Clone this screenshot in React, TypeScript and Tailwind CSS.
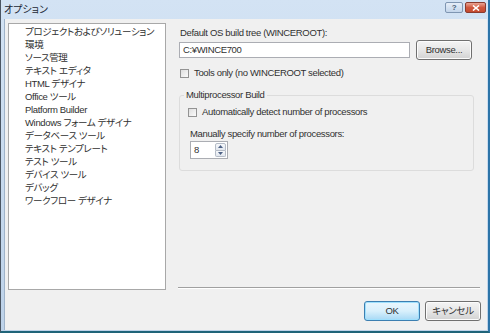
const items = [
  'プロジェクトおよびソリューション',
  '環境',
  'ソース管理',
  'テキスト エディタ',
  'HTML デザイナ',
  'Office ツール',
  'Platform Builder',
  'Windows フォーム デザイナ',
  'データベース ツール',
  'テキスト テンプレート',
  'テスト ツール',
  'デバイス ツール',
  'デバッグ',
  'ワークフロー デザイナ',
];

function CheckBox() {
  return (
    <span className="w-[9px] h-[9px] border border-[#939393] bg-gradient-to-br from-[#dedede] to-[#fbfbfb] shrink-0" />
  );
}

function Button({ label, primary }: { label: string; primary?: boolean }) {
  return (
    <div
      className={
        primary
          ? 'w-[56px] h-[20px] rounded-[3px] border border-[#3c7fb1] bg-gradient-to-b from-[#eaf6fd] via-[#d9f0fc] to-[#a7d9f5] flex items-center justify-center shadow-[inset_0_0_0_1px_#9fe0fd]'
          : 'w-[56px] h-[20px] rounded-[3px] border border-[#707070] bg-gradient-to-b from-[#f4f4f4] via-[#e7e7e7] to-[#d2d2d2] flex items-center justify-center shadow-[inset_0_0_0_1px_#fcfcfc]'
      }
    >
      {label}
    </div>
  );
}

export default function App() {
  return (
    <div className="w-[490px] h-[333px] flex flex-col bg-gradient-to-b from-[#d3e3f4] to-[#bdd2e9] border-l border-l-[#4b5663] border-r-2 border-r-[#2c74a8] border-b-2 border-b-[#1f6479] text-[#303030] text-[9.5px] tracking-[-0.35px] font-['Liberation_Sans','Noto_Sans_CJK_JP',sans-serif] [font-feature-settings:'palt'] overflow-hidden">
      {/* title bar */}
      <div className="h-[19px] flex items-center justify-between pl-[3px] pr-[2px] shrink-0">
        <span className="text-[10px] text-[#1a2633] tracking-[0px]">オプション</span>
        <div className="flex items-center gap-[2px] -mt-[4px]">
          <div className="w-[18px] h-[11px] rounded-[2px] border border-[#7f96b2] bg-gradient-to-b from-[#e6eef8] to-[#c3d5ea] flex items-center justify-center text-[8px] leading-none text-[#4b5f78] font-bold">
            ?
          </div>
          <div className="w-[21px] h-[11px] rounded-[2px] border border-[#8a3a2e] bg-gradient-to-b from-[#e8a494] via-[#d0583f] to-[#c44a2f] flex items-center justify-center">
            <svg width="8" height="6" viewBox="0 0 8 6">
              <path d="M1 0.5 L7 5.5 M7 0.5 L1 5.5" stroke="#ffffff" strokeWidth="1.6" />
            </svg>
          </div>
        </div>
      </div>

      {/* client */}
      <div className="flex-1 ml-[3px] mr-[1px] mb-[1px] bg-[#f0f0f0] border-l border-[#9fb3c9] flex flex-col pl-[3px] pt-[4px] pr-[6px]">
        <div className="flex h-[267px]">
          {/* list */}
          <div className="w-[158px] h-full bg-white border border-[#a8a8a8] pl-[16px] pt-[1px]">
            {items.map((t) => (
              <div key={t} className="h-[13px] leading-[13px] whitespace-nowrap">
                {t}
              </div>
            ))}
          </div>

          {/* right panel */}
          <div className="ml-[12px] w-[302px] flex flex-col">
            <div className="pl-[2px] mt-[4px] leading-[12px]">Default OS build tree (WINCEROOT):</div>
            <div className="flex items-center mt-[1px]">
              <div className="ml-[1px] w-[231px] h-[16px] bg-white border border-[#abadb3] flex items-center pl-[3px]">
                C:¥WINCE700
              </div>
              <div className="ml-[6px]">
                <Button label="Browse..." />
              </div>
            </div>
            <div className="flex items-center mt-[7px] pl-[2px] gap-[5px] leading-[12px]">
              <CheckBox />
              <span>Tools only (no WINCEROOT selected)</span>
            </div>

            {/* group box */}
            <div className="relative mt-[16px] ml-[1px] w-[295px] h-[76px] border border-[#dcdcdc] rounded-[3px] pt-[10px] pl-[8px]">
              <span className="absolute -top-[7px] left-[4px] px-[2px] bg-[#f0f0f0] leading-[12px]">
                Multiprocessor Build
              </span>
              <div className="flex items-center gap-[5px] leading-[12px]">
                <CheckBox />
                <span>Automatically detect number of processors</span>
              </div>
              <div className="mt-[10px] pl-[2px] leading-[12px]">Manually specify number of processors:</div>
              <div className="mt-[1px] ml-[2px] w-[38px] h-[18px] bg-white border border-[#abadb3] flex items-center justify-between pl-[3px] pr-[1px]">
                <span>8</span>
                <div className="flex flex-col w-[11px] h-[14px]">
                  <div className="flex-1 border border-[#b5bcc7] rounded-t-[2px] bg-gradient-to-b from-[#f6f8fb] to-[#e2e7ee] flex items-center justify-center">
                    <svg width="5" height="3" viewBox="0 0 5 3">
                      <path d="M0 3 L2.5 0 L5 3 Z" fill="#4d6185" />
                    </svg>
                  </div>
                  <div className="flex-1 border border-t-0 border-[#b5bcc7] rounded-b-[2px] bg-gradient-to-b from-[#f6f8fb] to-[#e2e7ee] flex items-center justify-center">
                    <svg width="5" height="3" viewBox="0 0 5 3">
                      <path d="M0 0 L2.5 3 L5 0 Z" fill="#4d6185" />
                    </svg>
                  </div>
                </div>
              </div>
            </div>

            <div className="mt-auto mb-[1px] h-[2px] border-t border-t-[#a0a0a0] border-b border-b-white" />
          </div>
        </div>

        {/* buttons */}
        <div className="flex justify-end gap-[5px] mt-[11px]">
          <Button label="OK" primary />
          <Button label="キャンセル" />
        </div>
      </div>
    </div>
  );
}
